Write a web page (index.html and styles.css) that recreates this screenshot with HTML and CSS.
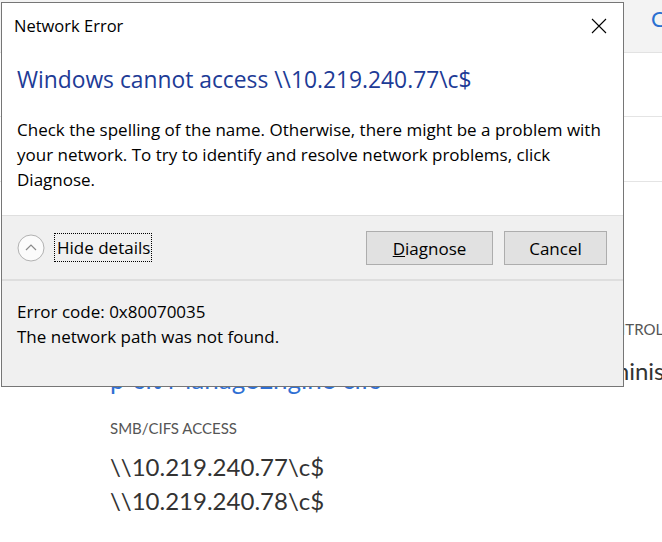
FILE: index.html
```html
<!DOCTYPE html>
<html>
<head>
<meta charset="utf-8">
<link rel="stylesheet" href="styles.css">
</head>
<body>
<div class="page">
  <header class="topbar"><span class="connect">Connect</span></header>
  <div class="row"></div>
  <div class="row"></div>
  <section class="detail">
    <div class="col-main">
      <div class="title">p-slt ManageEngine cifs</div>
      <div class="label label2">SMB/CIFS ACCESS</div>
      <div class="value">\\10.219.240.77\c$</div>
      <div class="value">\\10.219.240.78\c$</div>
    </div>
    <div class="col-side">
      <div class="label">CONTROL</div>
      <div class="side-value">Administrators</div>
    </div>
  </section>
</div>

<div class="dialog">
  <div class="titlebar">
    <span class="wintitle">Network Error</span>
    <svg class="close" width="16" height="16" viewBox="0 0 16 16"><path d="M1 1 L15 15 M15 1 L1 15" stroke="#000" stroke-width="1.1" fill="none"/></svg>
  </div>
  <div class="content">
    <h1 class="instruction">Windows cannot access \\10.219.240.77\c$</h1>
    <p class="message">Check the spelling of the name. Otherwise, there might be a problem with your network. To try to identify and resolve network problems, click Diagnose.</p>
  </div>
  <div class="band">
    <span class="expander"><svg width="28" height="28" viewBox="0 0 28 28"><circle cx="14" cy="14" r="13" fill="#fbfbfb" stroke="#b2b2b2" stroke-width="1"/><path d="M9 16 L14 11 L19 16" stroke="#8a8a8a" stroke-width="1.2" fill="none"/></svg></span>
    <span class="toggle">Hide details</span>
    <span class="spacer"></span>
    <button class="btn btn-diag"><u>D</u>iagnose</button>
    <button class="btn btn-cancel">Cancel</button>
  </div>
  <div class="details">
    <div>Error code: 0x80070035</div>
    <div>The network path was not found.</div>
  </div>
</div>
</body>
</html>
```
FILE: styles.css
```css
html, body {
  margin: 0;
  padding: 0;
}
body {
  width: 662px;
  height: 542px;
  overflow: hidden;
  background: #fff;
  position: relative;
  font-family: Lato, "Open Sans", sans-serif;
}
.page {
  width: 662px;
  height: 542px;
  overflow: hidden;
}
.topbar {
  height: 53px;
  background: #f3f3f3;
  border-bottom: 1px solid #e2e2e2;
  box-sizing: border-box;
  padding-left: 651px;
  white-space: nowrap;
  overflow: hidden;
  display: flex;
  align-items: center;
}
.connect {
  color: #2a6fd1;
  font-size: 22px;
  margin-top: -16px;
}
.row {
  height: 64px;
  border-bottom: 1px solid #e4e4e4;
  box-sizing: border-box;
}
.row + .row {
  height: 65px;
}
.detail {
  display: flex;
  padding-left: 110px;
  padding-top: 137px;
  white-space: nowrap;
}
.col-main {
  width: 465px;
  flex-shrink: 0;
  display: flex;
  flex-direction: column;
  padding-top: 20px;
}
.col-side {
  flex-shrink: 0;
  display: flex;
  flex-direction: column;
}
.label {
  font-size: 15px;
  line-height: 20px;
  color: #555;
}
.col-side .label {
  padding-left: 17px;
}
.title {
  font-size: 26px;
  line-height: 34px;
  color: #2f6fd3;
  margin-top: 23px;
}
.label2 {
  margin-top: 22px;
}
.value {
  font-size: 24px;
  line-height: 34px;
  color: #333;
}
.label2 + .value {
  margin-top: 12px;
}
.side-value {
  font-size: 24px;
  line-height: 34px;
  color: #333;
  margin-top: 15px;
  padding-left: 5px;
}

/* dialog window */
.dialog {
  position: absolute;
  left: 1px;
  top: 2px;
  width: 623px;
  height: 385px;
  box-sizing: border-box;
  border: 1px solid #767676;
  background: #f0f0f0;
  font-family: "Open Sans", "Noto Sans", sans-serif;
  color: #000;
  display: flex;
  flex-direction: column;
}
.titlebar {
  height: 45px;
  background: #fff;
  display: flex;
  align-items: center;
  padding: 0 16px 0 12px;
}
.wintitle {
  font-size: 16.5px;
  line-height: 22px;
  flex: 1;
}
.close {
  display: block;
}
.content {
  background: #fff;
  padding: 17px 14px 23px 15px;
}
.instruction {
  margin: 0;
  font-weight: normal;
  font-size: 22.8px;
  line-height: 30px;
  color: #1d3b96;
}
.message {
  margin: 22px 0 0;
  font-size: 17px;
  line-height: 25px;
}
.band {
  height: 66px;
  box-sizing: border-box;
  border-top: 1px solid #dfdfdf;
  border-bottom: 2px solid #dedede;
  display: flex;
  align-items: center;
  padding: 0 16px 0 15px;
}
.expander {
  display: flex;
  width: 28px;
  height: 28px;
}
.toggle {
  margin-left: 10px;
  font-size: 17px;
  line-height: 25px;
  padding: 1px 1px 1px 2px;
  outline: 1px dotted #000;
}
.spacer {
  flex: 1;
}
.btn {
  height: 34px;
  box-sizing: border-box;
  background: #e1e1e1;
  border: 1px solid #adadad;
  font-family: "Open Sans", "Noto Sans", sans-serif;
  font-size: 17px;
  color: #000;
  padding: 0;
  margin-top: 1px;
}
.btn-diag {
  width: 127px;
}
.btn-cancel {
  width: 103px;
  margin-left: 11px;
}
.details {
  flex: 1;
  padding: 18px 16px 0 15px;
  font-size: 17px;
  line-height: 25px;
}
```
